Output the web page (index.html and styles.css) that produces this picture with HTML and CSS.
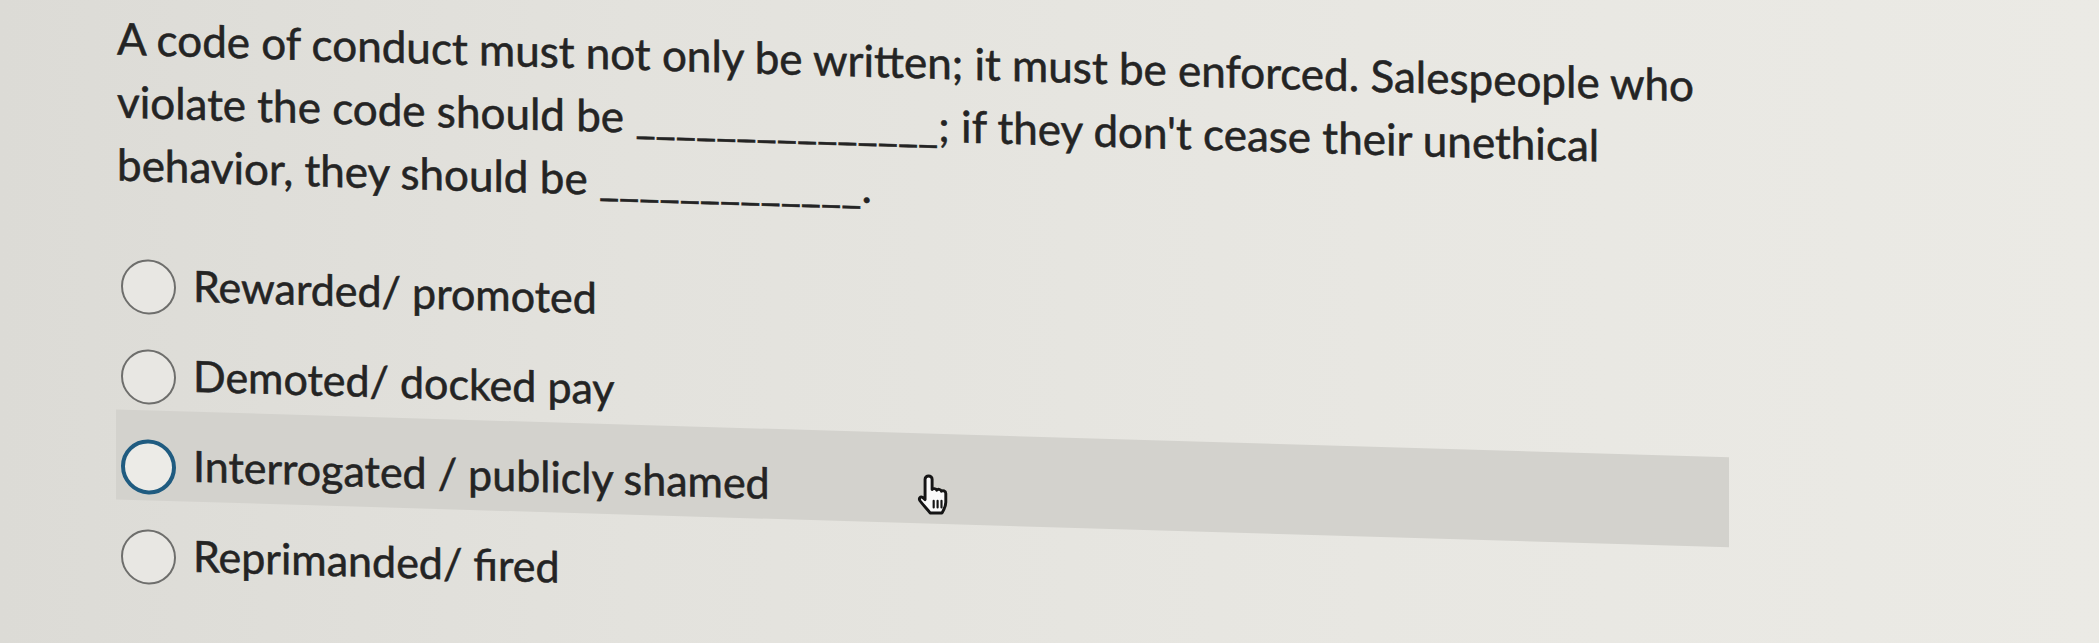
FILE: index.html
```html
<!DOCTYPE html>
<html lang="en">
<head>
<meta charset="utf-8">
<title>Quiz question</title>
<link rel="stylesheet" href="styles.css">
</head>
<body>
<main class="quiz">
  <div class="question">
    <p>A code of conduct must not only be written; it must be enforced. Salespeople who<br>violate the code should be <span class="blank">_______________</span>; if they don't cease their unethical<br>behavior, they should be <span class="blank">_____________</span>.</p>
  </div>
  <ul class="answers">
    <li class="answer"><span class="radio"></span><span class="label">Rewarded/ promoted</span></li>
    <li class="answer"><span class="radio"></span><span class="label">Demoted/ docked pay</span></li>
    <li class="answer is-hover"><span class="radio is-focus"></span><span class="label">Interrogated / publicly shamed</span></li>
    <li class="answer"><span class="radio"></span><span class="label">Reprimanded/ fired</span></li>
  </ul>
</main>
<svg class="cursor" viewBox="0 0 18 22" aria-hidden="true">
  <path d="M7 1.5 C8 1.5 8.8 2.2 8.8 3.2 V8.5 C9.2 7.8 10.8 7.8 11.2 8.8 C11.7 8.1 13.2 8.2 13.6 9.3 C14.2 8.8 15.8 9.1 15.8 10.5 V15 C15.8 17.5 14.6 19 13.8 20.5 H7.8 C6.5 18.5 4.5 16.8 2.6 14.2 C1.8 13 2.8 11.8 4 12.5 L5.2 13.6 V3.2 C5.2 2.2 6 1.5 7 1.5 Z" fill="#fafafa" stroke="#151515" stroke-width="1.5" stroke-linejoin="round"/>
  <path d="M9.6 14.2 V17.6 M11.6 14.2 V17.6 M13.6 14.2 V17.6" stroke="#151515" stroke-width="1.1" stroke-linecap="round"/>
</svg>
</body>
</html>
```
FILE: styles.css
```css
html, body {
  margin: 0;
  padding: 0;
}
body {
  width: 2099px;
  height: 643px;
  overflow: hidden;
  position: relative;
  background: linear-gradient(90deg, #dcdbd6 0%, #e3e2dd 30%, #e8e7e2 65%, #ebeae5 100%);
  font-family: Lato, "Open Sans", "Noto Sans", sans-serif;
  color: #242424;
  -webkit-text-stroke: 0.55px #242424;
}
.quiz {
  padding: 3px 0 0 117px;
  transform: skewY(1.7deg);
  transform-origin: 0 0;
}
.question p {
  margin: 0;
  font-size: 44px;
  line-height: 63px;
  white-space: nowrap;
}
.answers {
  list-style: none;
  margin: 34px 0 0 -1px;
  padding: 0;
  width: 1613px;
}
.answer {
  display: flex;
  align-items: center;
  gap: 17px;
  height: 90px;
  box-sizing: border-box;
  padding: 16px 0 0 5px;
  font-size: 43px;
}
.answer.is-hover {
  background: #d3d2cd;
}
.radio {
  flex: none;
  width: 55px;
  height: 55px;
  box-sizing: border-box;
  border-radius: 50%;
  border: 2.5px solid #6e6e6c;
  background: #e8e7e3;
  margin-top: 6px;
  -webkit-text-stroke: 0;
}
.radio.is-focus {
  border: 4.5px solid #1f5b80;
  background: #ecebe7;
}
.label {
  white-space: nowrap;
}
.cursor {
  position: absolute;
  left: 914px;
  top: 473px;
  width: 37px;
  height: 43px;
}
```
